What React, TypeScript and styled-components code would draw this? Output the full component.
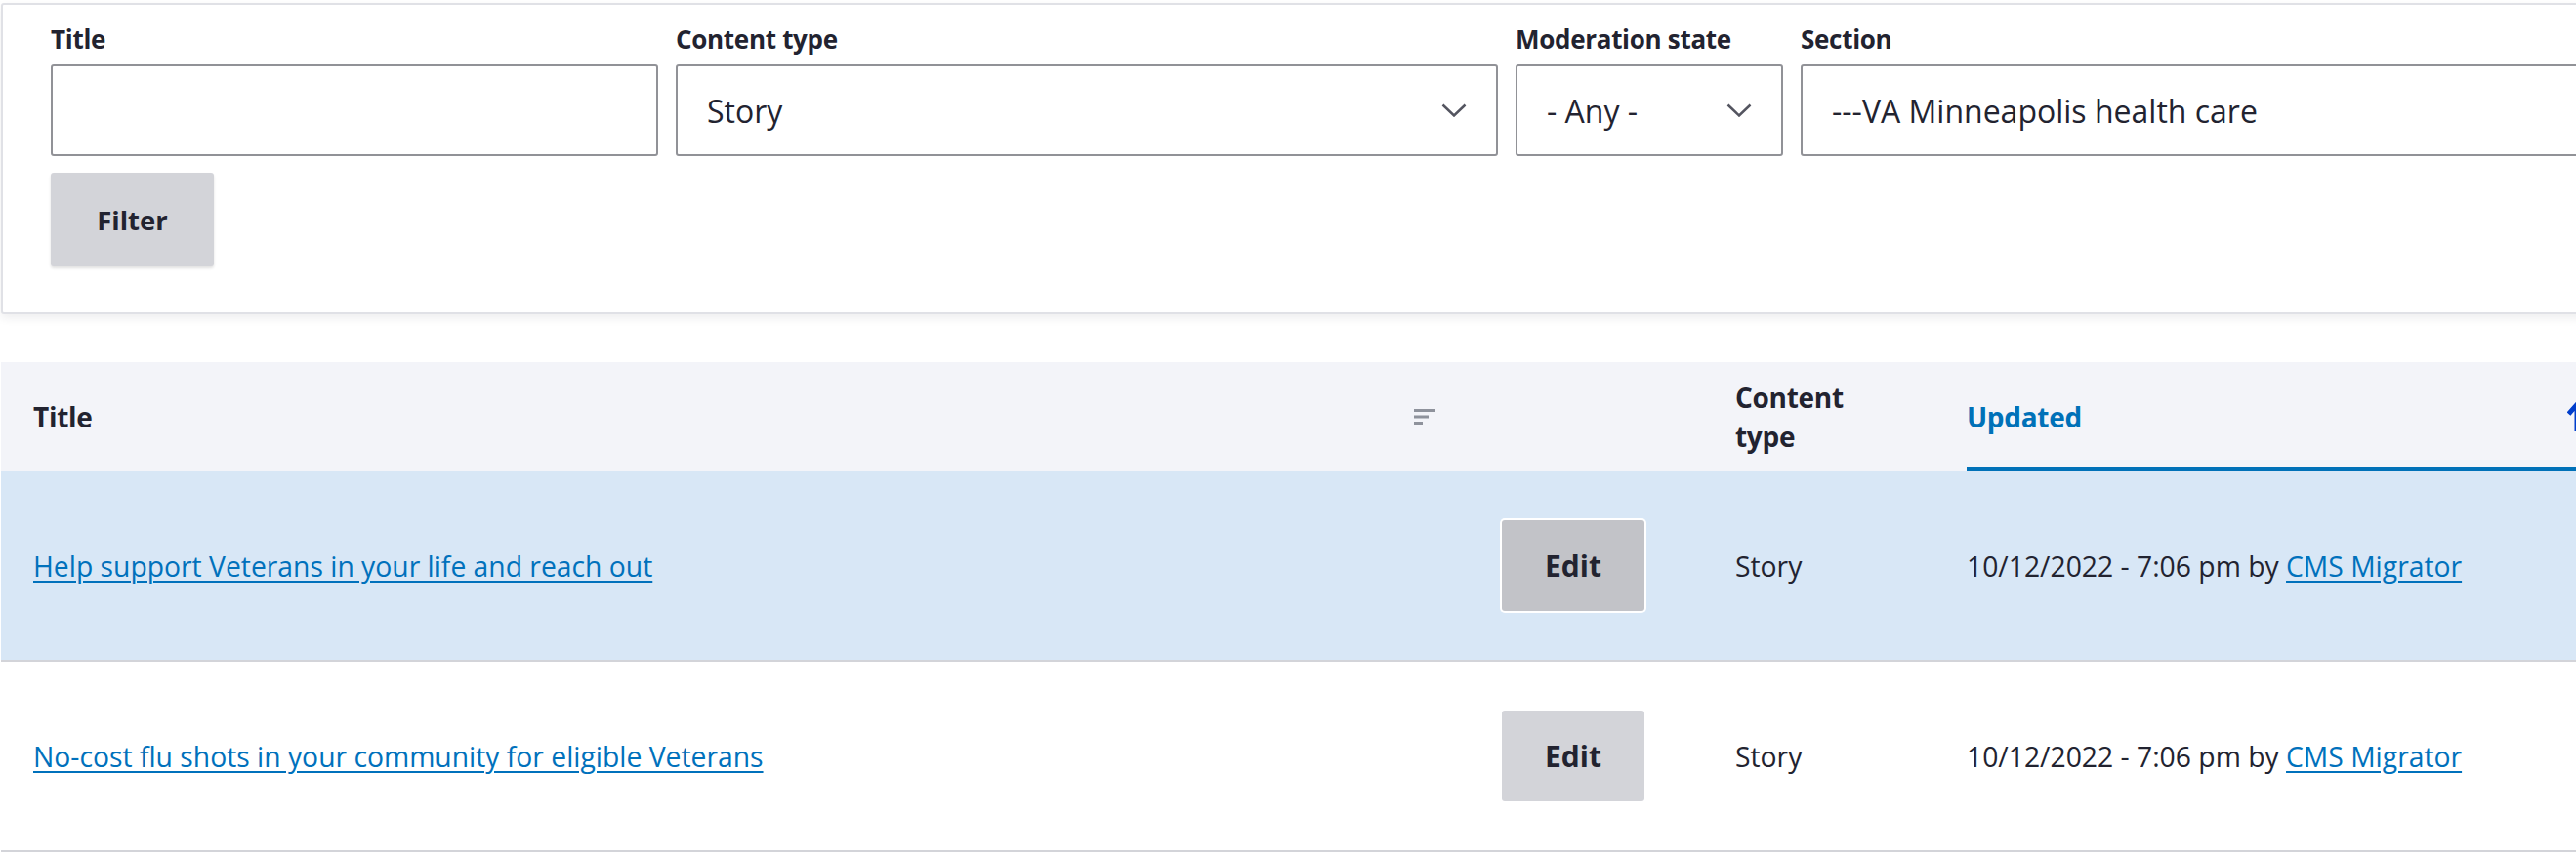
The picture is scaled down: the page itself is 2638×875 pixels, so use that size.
import React from 'react';
import styled, { createGlobalStyle } from 'styled-components';

const GlobalStyle = createGlobalStyle`
  html, body {
    margin: 0;
    padding: 0;
    overflow: hidden;
    background: #fff;
  }
  body {
    font-family: "Open Sans", "Liberation Sans", sans-serif;
    color: #222330;
  }
`;

const Page = styled.div`
  width: 2900px;
`;

const FilterCard = styled.form`
  margin: 3px 0 0 1px;
  width: 2860px;
  border: 2px solid #e0e1e6;
  border-radius: 3px;
  box-shadow: 0 4px 10px rgba(34, 35, 48, 0.08);
  padding: 17px 49px 47px;
  box-sizing: border-box;
  background: #fff;
`;

const FieldRow = styled.div`
  display: flex;
  gap: 18px;
`;

const Field = styled.div<{ $width: number }>`
  display: flex;
  flex-direction: column;
  width: ${(p) => p.$width}px;
  flex-shrink: 0;
`;

const Label = styled.label`
  font-size: 26px;
  font-weight: 700;
  line-height: 36px;
  margin-bottom: 8px;
  color: #222330;
  letter-spacing: -0.3px;
`;

const TextInput = styled.div`
  height: 94px;
  box-sizing: border-box;
  border: 2px solid #919297;
  border-radius: 3px;
  background: #fff;
`;

const SelectBox = styled.div`
  height: 94px;
  box-sizing: border-box;
  border: 2px solid #919297;
  border-radius: 3px;
  background: #fff;
  display: flex;
  align-items: center;
  justify-content: space-between;
  padding: 0 30px 0 30px;
  font-size: 32px;
  color: #222330;
`;

const FilterButton = styled.button`
  margin-top: 17px;
  width: 167px;
  height: 96px;
  border: 0;
  border-radius: 3px;
  background: #d3d4d9;
  box-shadow: 0 2px 3px rgba(0, 0, 0, 0.12);
  font-family: inherit;
  font-size: 27.5px;
  font-weight: 700;
  color: #222330;
`;

const Table = styled.div`
  margin: 49px 0 0 1px;
  width: 2679px;
`;

const columns = '1503px 239px 237px 700px';

const HeaderRow = styled.div`
  display: grid;
  grid-template-columns: ${columns};
  height: 112px;
  background: #f3f4f9;
`;

const HeaderCell = styled.div<{ $padLeft?: number }>`
  display: flex;
  align-items: center;
  justify-content: space-between;
  padding: 0 34px 0 ${(p) => p.$padLeft ?? 34}px;
  font-size: 28px;
  font-weight: 700;
  line-height: 40px;
  color: #222330;
  letter-spacing: -0.3px;
`;

const ActiveHeaderCell = styled.div`
  padding-left: 34px;
  display: flex;
`;

const SortLink = styled.div`
  flex: 1;
  display: flex;
  align-items: center;
  justify-content: space-between;
  padding: 5px 31px 0 0;
  border-bottom: 5px solid #0071b8;
  font-size: 28px;
  font-weight: 700;
  color: #0071b8;
  letter-spacing: -0.3px;
`;

const BodyRow = styled.div<{ $highlighted?: boolean }>`
  display: grid;
  grid-template-columns: ${columns};
  height: 195px;
  box-sizing: border-box;
  border-bottom: 2px solid #d3d4d9;
  background: ${(p) => (p.$highlighted ? '#d8e7f6' : '#fff')};
`;

const Cell = styled.div<{ $padLeft?: number }>`
  display: flex;
  align-items: center;
  padding-left: ${(p) => p.$padLeft ?? 34}px;
  font-size: 28.3px;
  color: #222330;
  white-space: nowrap;
`;

const Link = styled.a`
  color: #0071bc;
  text-decoration: underline;
  text-decoration-thickness: 2px;
  text-underline-offset: 4px;
  cursor: pointer;
`;

const EditButton = styled.button<{ $hovered?: boolean }>`
  width: 146px;
  height: 93px;
  border: 0;
  border-radius: 3px;
  background: ${(p) => (p.$hovered ? '#c2c3c8' : '#d3d4d9')};
  box-shadow: ${(p) => (p.$hovered ? '0 0 0 2px #fff' : 'none')};
  font-family: inherit;
  font-size: 30px;
  font-weight: 700;
  color: #222330;
`;

const Chevron = () => (
  <svg width="26" height="14" viewBox="0 0 26 14" fill="none">
    <polyline points="1.5,1.5 13,12.5 24.5,1.5" stroke="#545560" strokeWidth="2.5" />
  </svg>
);

const SortIcon = () => (
  <svg width="22" height="16" viewBox="0 0 22 16">
    <rect x="0" y="0" width="22" height="3" fill="#8e929c" />
    <rect x="0" y="6.5" width="15" height="3" fill="#8e929c" />
    <rect x="0" y="13" width="9" height="3" fill="#8e929c" />
  </svg>
);

const ArrowUp = () => (
  <svg width="20" height="30" viewBox="0 0 20 30" fill="none">
    <path d="M10 2.5 V30 M1.5 12 L10 2.5 L18.5 12" stroke="#003ecc" strokeWidth="5" />
  </svg>
);

const rows = [
  { title: 'Help support Veterans in your life and reach out', highlighted: true },
  { title: 'No-cost flu shots in your community for eligible Veterans', highlighted: false },
];

const App = () => {
  return (
    <Page>
      <GlobalStyle />
      <FilterCard>
        <FieldRow>
          <Field $width={622}>
            <Label>Title</Label>
            <TextInput />
          </Field>
          <Field $width={842}>
            <Label>Content type</Label>
            <SelectBox>
              Story
              <Chevron />
            </SelectBox>
          </Field>
          <Field $width={274}>
            <Label>Moderation state</Label>
            <SelectBox>
              - Any -
              <Chevron />
            </SelectBox>
          </Field>
          <Field $width={900}>
            <Label>Section</Label>
            <SelectBox>---VA Minneapolis health care</SelectBox>
          </Field>
        </FieldRow>
        <FilterButton type="button">Filter</FilterButton>
      </FilterCard>

      <Table>
        <HeaderRow>
          <HeaderCell $padLeft={33}>
            Title
            <SortIcon />
          </HeaderCell>
          <HeaderCell />
          <HeaderCell>Content type</HeaderCell>
          <ActiveHeaderCell>
            <SortLink>
              Updated
              <ArrowUp />
            </SortLink>
          </ActiveHeaderCell>
        </HeaderRow>
        {rows.map((row) => (
          <BodyRow key={row.title} $highlighted={row.highlighted}>
            <Cell $padLeft={33}>
              <Link>{row.title}</Link>
            </Cell>
            <Cell>
              <EditButton type="button" $hovered={row.highlighted}>
                Edit
              </EditButton>
            </Cell>
            <Cell>Story</Cell>
            <Cell>
              10/12/2022 - 7:06 pm by&nbsp;<Link>CMS Migrator</Link>
            </Cell>
          </BodyRow>
        ))}
      </Table>
    </Page>
  );
};

export default App;
